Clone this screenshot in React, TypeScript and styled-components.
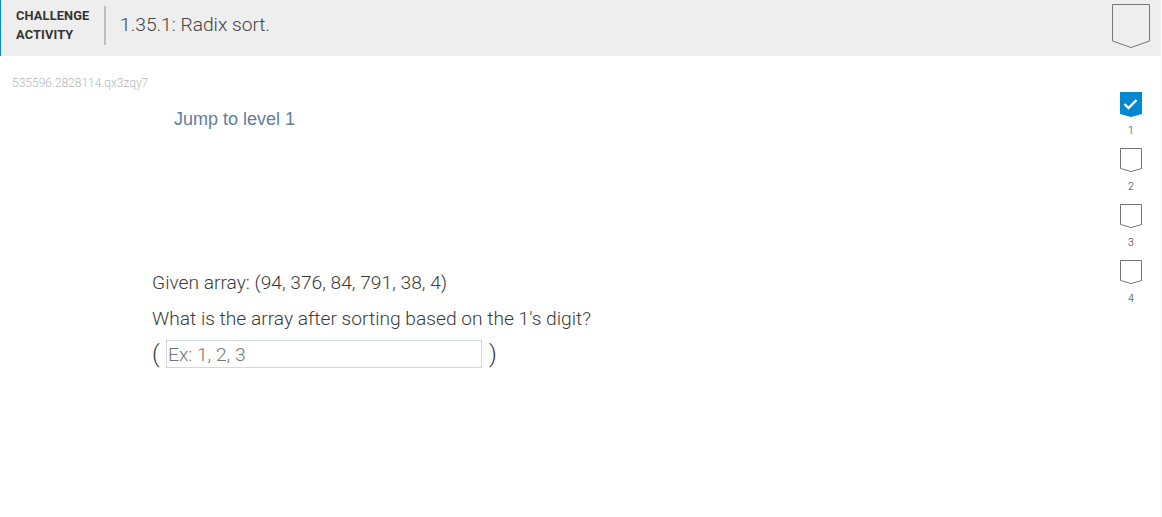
import React from 'react';
import styled, { createGlobalStyle } from 'styled-components';

const GlobalStyle = createGlobalStyle`
  html, body {
    margin: 0;
    padding: 0;
    background: #fff;
  }
  body {
    font-family: Roboto, "Liberation Sans", sans-serif;
    color: #333;
  }
`;

const Page = styled.div`
  width: 1162px;
  height: 517px;
  overflow: hidden;
  display: flex;
  flex-direction: column;
`;

const Header = styled.header`
  height: 56px;
  flex: none;
  background: #eeeeee;
  border-left: 1px solid #0288d1;
  margin-right: 1px;
  display: flex;
  align-items: flex-start;
  padding: 0 11px 0 15px;
`;

const Caption = styled.div`
  width: 88px;
  font-size: 12.8px;
  font-weight: 700;
  line-height: 19px;
  letter-spacing: 0.15px;
  color: #333;
  margin-top: 6px;
`;

const Divider = styled.div`
  width: 2px;
  height: 39px;
  background: #bdbdbd;
  margin: 6px 14px 0 0;
`;

const Title = styled.div`
  font-size: 19.2px;
  line-height: 24px;
  font-weight: 300;
  color: #444;
  flex: 1;
  margin-top: 13px;
`;

const Body = styled.main`
  flex: 1;
  display: flex;
`;

const Content = styled.div`
  flex: 1;
  min-width: 0;
  display: flex;
  flex-direction: column;
`;

const ActivityId = styled.div`
  font-size: 12px;
  line-height: 14px;
  font-weight: 300;
  color: #b5b5b5;
  margin: 20px 0 0 12px;
`;

const JumpLink = styled.div`
  font-family: "Liberation Sans", sans-serif;
  font-size: 18px;
  line-height: 21px;
  color: #5f7d9c;
  margin: 19px 0 0 174px;
`;

const Question = styled.div`
  margin: 135px 0 0 152px;
  font-size: 19.2px;
  font-weight: 300;
  color: #3a3a3a;
`;

const Line = styled.div`
  height: 36px;
  line-height: 36px;
`;

const AnswerRow = styled.div`
  display: flex;
  align-items: center;
  height: 28px;
  margin-top: 3px;
  font-size: 24px;
  font-weight: 300;
`;

const Paren = styled.span`
  width: 14px;
  line-height: 28px;
`;

const AnswerInput = styled.input`
  width: 316px;
  height: 28px;
  box-sizing: border-box;
  border: 1px solid #cfd8dc;
  padding: 0 1px;
  margin-right: 7px;
  font-family: Roboto, sans-serif;
  font-size: 19.2px;
  font-weight: 300;
  outline: none;

  &::placeholder {
    color: #757575;
    opacity: 1;
  }
`;

const Levels = styled.aside`
  width: 62px;
  flex: none;
  border-right: 1px solid #f5f5f5;
  box-sizing: border-box;
  display: flex;
  flex-direction: column;
  align-items: center;
  padding: 36px 0 0 1px;
`;

const Level = styled.div`
  height: 56px;
  display: flex;
  flex-direction: column;
  align-items: center;
`;

const LevelNumber = styled.div`
  font-size: 10.5px;
  font-weight: 300;
  line-height: 12px;
  margin-top: 8px;
  color: #333;
`;

const HeaderBadge = styled.svg`
  display: block;
  flex: none;
  margin-top: 4px;
`;

const LevelBadge = styled.svg`
  display: block;
`;

function App() {
  return (
    <Page>
      <GlobalStyle />
      <Header>
        <Caption>
          CHALLENGE
          <br />
          ACTIVITY
        </Caption>
        <Divider />
        <Title>1.35.1: Radix sort.</Title>
        <HeaderBadge width="38" height="44" viewBox="0 0 38 44">
          <path d="M.5.5H37.5V37L19 43.5L.5 37Z" fill="none" stroke="#757575" strokeWidth="1" />
        </HeaderBadge>
      </Header>
      <Body>
        <Content>
          <ActivityId>535596.2828114.qx3zqy7</ActivityId>
          <JumpLink>Jump to level 1</JumpLink>
          <Question>
            <Line>Given array: (94, 376, 84, 791, 38, 4)</Line>
            <Line>What is the array after sorting based on the 1's digit?</Line>
            <AnswerRow>
              <Paren>(</Paren>
              <AnswerInput placeholder="Ex: 1, 2, 3" />
              <Paren>)</Paren>
            </AnswerRow>
          </Question>
        </Content>
        <Levels>
          {[1, 2, 3, 4].map(n => (
            <Level key={n}>
              {n === 1 ? (
                <LevelBadge width="22" height="25" viewBox="0 0 22 25">
                  <path d="M0 0H22V22L11 25L0 22Z" fill="#0288d1" />
                  <path d="M4.5 12L8.5 16L16.5 8" fill="none" stroke="#fff" strokeWidth="2.4" />
                </LevelBadge>
              ) : (
                <LevelBadge width="22" height="25" viewBox="0 0 22 25">
                  <path d="M.5.5H21.5V20.5L11 23.5L.5 20.5Z" fill="none" stroke="#757575" strokeWidth="1" />
                </LevelBadge>
              )}
              <LevelNumber>{n}</LevelNumber>
            </Level>
          ))}
        </Levels>
      </Body>
    </Page>
  );
}

export default App;
